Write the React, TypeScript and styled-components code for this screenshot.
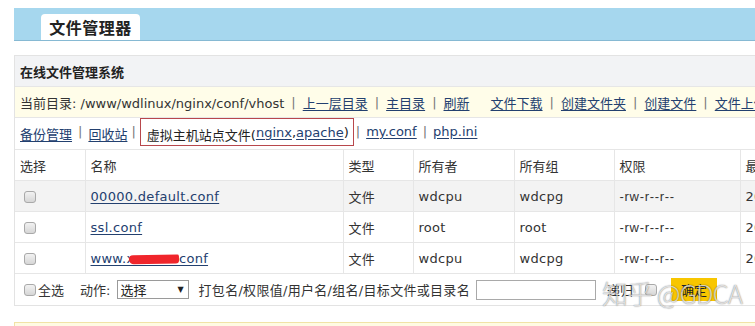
import React from 'react';
import styled, { createGlobalStyle } from 'styled-components';

const GlobalStyle = createGlobalStyle`
  html, body {
    margin: 0;
    padding: 0;
    background: #fff;
    overflow: hidden;
  }
  body {
    font-family: "DejaVu Sans", "Noto Sans CJK SC", sans-serif;
    font-size: 13px;
    color: #333;
  }
`;

interface FileRow {
  name: string;
  type: string;
  owner: string;
  group: string;
  perm: string;
  mtime: string;
  masked?: boolean;
}

const files: FileRow[] = [
  { name: '00000.default.conf', type: '文件', owner: 'wdcpu', group: 'wdcpg', perm: '-rw-r--r--', mtime: '2016-05-18 11:23:45' },
  { name: 'ssl.conf', type: '文件', owner: 'root', group: 'root', perm: '-rw-r--r--', mtime: '2016-05-18 11:23:45' },
  { name: 'www.xxxxxx.conf', type: '文件', owner: 'wdcpu', group: 'wdcpg', perm: '-rw-r--r--', mtime: '2016-05-18 11:23:45', masked: true },
];

const App = () => {
  return (
    <Page>
      <GlobalStyle />
      <TopBar>
        <Tab>文件管理器</Tab>
      </TopBar>

      <Panel>
        <PanelTitle>在线文件管理系统</PanelTitle>

        <PathRow>
          当前目录: /www/wdlinux/nginx/conf/vhost
          <Sep>|</Sep>
          <Link href='#'>上一层目录</Link>
          <Sep>|</Sep>
          <Link href='#'>主目录</Link>
          <Sep>|</Sep>
          <Link href='#'>刷新</Link>
          <Spacer />
          <Link href='#'>文件下载</Link>
          <Sep>|</Sep>
          <Link href='#'>创建文件夹</Link>
          <Sep>|</Sep>
          <Link href='#'>创建文件</Link>
          <Sep>|</Sep>
          <Link href='#'>文件上传</Link>
        </PathRow>

        <ShortcutRow>
          <Link href='#'>备份管理</Link>
          <Sep $l={6} $r={6}>|</Sep>
          <Link href='#'>回收站</Link>
          <Sep $l={4} $r={4}>|</Sep>
          <Highlight>
            虚拟主机站点文件(<Link href='#'>nginx</Link>,<Link href='#'>apache</Link>)
          </Highlight>
          <Sep $l={2} $r={6}>|</Sep>
          <Link href='#'>my.conf</Link>
          <Sep $l={6} $r={6}>|</Sep>
          <Link href='#'>php.ini</Link>
        </ShortcutRow>

        <FileTable>
          <colgroup>
            <col style={{ width: 70 }} />
            <col style={{ width: 258 }} />
            <col style={{ width: 70 }} />
            <col style={{ width: 101 }} />
            <col style={{ width: 100 }} />
            <col style={{ width: 126 }} />
            <col style={{ width: 175 }} />
          </colgroup>
          <thead>
            <tr>
              <Th>选择</Th>
              <Th>名称</Th>
              <Th>类型</Th>
              <Th>所有者</Th>
              <Th>所有组</Th>
              <Th>权限</Th>
              <Th>最后修改时间</Th>
            </tr>
          </thead>
          <tbody>
            {files.map((f, i) => (
              <Tr key={f.name} $hover={i === 0}>
                <Td>
                  <Check type='checkbox' />
                </Td>
                <Td>
                  <NameCell>
                    <Link href='#'>{f.name}</Link>
                    {f.masked && <Scribble />}
                  </NameCell>
                </Td>
                <Td>{f.type}</Td>
                <Td>{f.owner}</Td>
                <Td>{f.group}</Td>
                <Td $narrow>{f.perm}</Td>
                <Td>{f.mtime}</Td>
              </Tr>
            ))}
          </tbody>
        </FileTable>

        <FooterRow>
          <Check type='checkbox' />
          <FooterLabel>全选</FooterLabel>
          <FooterLabel $gap={16}>动作: </FooterLabel>
          <FakeSelect>
            <span>选择</span>
            <Caret>▼</Caret>
          </FakeSelect>
          <FooterLabel $gap={10} $spaced>打包名/权限值/用户名/组名/目标文件或目录名</FooterLabel>
          <TextInput />
          <FooterLabel $gap={11}>递归</FooterLabel>
          <Check type='checkbox' $gap={12} />
          <OkButton>确定</OkButton>
          <Watermark>知乎 @GDCA</Watermark>
        </FooterRow>
      </Panel>

      <Notice />
    </Page>
  );
};

export default App;

const Page = styled.div`
  padding: 8px 0 0 14px;
  width: 1000px;
`;

const TopBar = styled.div`
  display: flex;
  align-items: flex-end;
  height: 32px;
  background: #a6d7ee;
  border-bottom: 1px solid #86b9d3;
  padding-left: 27px;
`;

const Tab = styled.div`
  width: 99px;
  height: 26px;
  background: #fff;
  border-radius: 4px 4px 0 0;
  display: flex;
  align-items: center;
  justify-content: center;
  font-family: "Noto Sans CJK SC", sans-serif;
  font-size: 16px;
  font-weight: bold;
  color: #222;
  letter-spacing: 0.5px;
`;

const Panel = styled.div`
  margin-top: 14px;
  border-top: 1px solid #e3e3e3;
  border-left: 1px solid #e3e3e3;
  border-bottom: 1px solid #e3e3e3;
  width: 920px;
`;

const Row = styled.div`
  box-sizing: border-box;
  display: flex;
  align-items: center;
  height: 31px;
  padding-left: 5px;
  border-bottom: 1px solid #e6e6e6;
  white-space: nowrap;
`;

const PanelTitle = styled(Row)`
  background: #f2f3f5;
  font-family: "Noto Sans CJK SC", sans-serif;
  font-weight: bold;
  font-size: 13px;
  color: #222;
`;

const PathRow = styled(Row)`
  background: #fffde9;
  color: #333;
`;

const ShortcutRow = styled(Row)`
  background: #fff;
  border-bottom: none;
  align-items: flex-start;
  padding-top: 6px;
`;

const Highlight = styled.span`
  display: inline-flex;
  align-items: flex-start;
  box-sizing: border-box;
  height: 28px;
  margin-top: -6px;
  padding: 6px 4px 0 6px;
  border: 1px solid #b8474c;
  color: #222;
`;

const Link = styled.a`
  color: #23406f;
  text-decoration: underline;
  text-underline-offset: 2px;
`;

const Sep = styled.span<{ $l?: number; $r?: number }>`
  color: #777;
  margin: 0 ${(p) => p.$r ?? 7}px 0 ${(p) => p.$l ?? 7}px;
`;

const Spacer = styled.span`
  width: 21px;
`;

const FileTable = styled.table`
  border-collapse: collapse;
  table-layout: fixed;
  width: 900px;
  border-top: 1px solid #e6e6e6;
`;

const Th = styled.th`
  height: 30px;
  padding: 0 0 0 5px;
  text-align: left;
  font-weight: normal;
  color: #333;
  border-bottom: 1px solid #e6e6e6;
  border-left: 1px solid #e6e6e6;
  white-space: nowrap;
  overflow: hidden;

  &:first-child {
    border-left: none;
  }
`;

const Tr = styled.tr<{ $hover?: boolean }>`
  background: ${(p) => (p.$hover ? '#f3f3f3' : '#fff')};
`;

const Td = styled.td<{ $narrow?: boolean }>`
  height: 30px;
  padding: 0 0 0 5px;
  border-bottom: 1px solid #e6e6e6;
  border-left: 1px solid #e6e6e6;
  white-space: nowrap;
  overflow: hidden;
  letter-spacing: ${(p) => (p.$narrow ? '0.7px' : '0.3px')};
  font-family: ${(p) => (p.$narrow ? '"Liberation Sans", sans-serif' : 'inherit')};

  &:first-child {
    border-left: none;
    padding-left: 9px;
  }
`;

const NameCell = styled.span`
  position: relative;
  display: inline-block;
`;

const Scribble = styled.span`
  position: absolute;
  left: 38px;
  top: 4px;
  width: 50px;
  height: 9px;
  background: #f0252b;
  border-radius: 5px 2px 4px 6px;
  transform: rotate(-1deg);
`;

const Check = styled.input<{ $gap?: number }>`
  appearance: none;
  box-sizing: border-box;
  width: 12px;
  height: 12px;
  margin: 0 0 0 ${(p) => p.$gap ?? 0}px;
  border: 1px solid #a9a9a9;
  border-radius: 3px;
  background: linear-gradient(#f2f2f2, #d6d6d6);
  vertical-align: middle;
`;

const FooterRow = styled(Row)`
  position: relative;
  padding-left: 9px;
  border-bottom: none;
`;

const FooterLabel = styled.span<{ $gap?: number; $spaced?: boolean }>`
  margin-left: ${(p) => p.$gap ?? 2}px;
  letter-spacing: ${(p) => (p.$spaced ? '0.3px' : '0')};
  white-space: pre;
`;

const FakeSelect = styled.div`
  box-sizing: border-box;
  width: 72px;
  height: 19px;
  margin-left: 2px;
  display: flex;
  align-items: center;
  justify-content: space-between;
  padding: 0 4px 0 3px;
  border: 1px solid #9a9a9a;
  background: #fff;
  color: #222;
`;

const Caret = styled.span`
  font-size: 8px;
  color: #222;
`;

const TextInput = styled.input`
  box-sizing: border-box;
  width: 120px;
  height: 20px;
  margin: 0 0 0 6px;
  border: 1px solid #a9a9a9;
  padding: 0;
`;

const OkButton = styled.button`
  box-sizing: border-box;
  width: 46px;
  height: 23px;
  margin-left: 14px;
  border: none;
  background: #f8c600;
  color: #222;
  font-family: "Noto Sans CJK SC", sans-serif;
  font-size: 13px;
  padding: 0;
`;

const Watermark = styled.span`
  position: absolute;
  left: 587px;
  top: 0px;
  font-family: "Noto Sans CJK SC", sans-serif;
  font-weight: 300;
  font-size: 26px;
  letter-spacing: -1px;
  color: rgba(255, 255, 255, 0.72);
  text-shadow: 0 0 1px rgba(0, 0, 0, 0.45), 0 0 2px rgba(0, 0, 0, 0.2);
  pointer-events: none;
`;

const Notice = styled.div`
  margin-top: 16px;
  height: 40px;
  background: #fffbe3;
  border-top: 1px solid #f1e3a6;
  border-left: 1px solid #f1e3a6;
`;
